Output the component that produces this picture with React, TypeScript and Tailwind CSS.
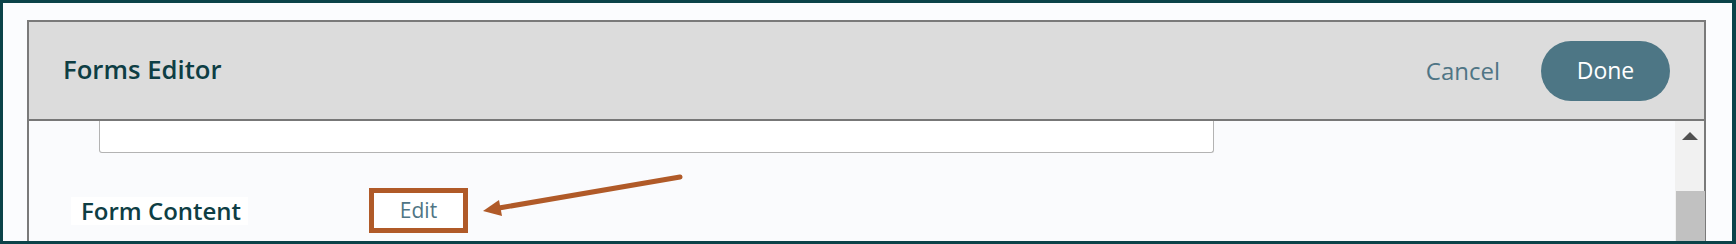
export default function App() {
  return (
    <div
      className="relative w-[1736px] h-[244px] overflow-hidden border-[3px] border-r-4 border-[#0b4349] bg-[#fbfcfe] pl-[24px] pr-[26px] pt-[17px]"
      style={{ fontFamily: '"Open Sans", "Noto Sans", sans-serif' }}
    >
      <div className="w-[1679px] h-[240px] border-2 border-b-0 border-[#7a7a7a] flex flex-col bg-[#fafbfd]">
        <div className="h-[99px] shrink-0 bg-[#dcdcdc] border-b-2 border-[#777777] flex items-center justify-between pl-[34px] pr-[34px]">
          <div className="text-[25.7px] font-semibold text-[#0e3e44]">Forms Editor</div>
          <div className="flex items-center gap-[41px]">
            <button className="text-[24px] text-[#4f7585]">Cancel</button>
            <button className="w-[129px] h-[60px] rounded-full bg-[#4d7685] text-white text-[23px]">Done</button>
          </div>
        </div>
        <div className="flex flex-1">
          <div className="flex-1">
            <div className="ml-[70px] w-[1115px] h-[32px] bg-white border border-t-0 border-[#b3b3b3] rounded-b-[3px]" />
            <div className="flex items-center mt-[35px] pl-[42px]">
              <div className="w-[177px] h-[28px] bg-white px-[10px] flex items-center whitespace-nowrap text-[24px] font-semibold text-[#0e3e44]">
                Form Content
              </div>
              <div className="ml-[121px] w-[99px] h-[45px] border-[5px] border-[#b05a28] bg-white flex items-center justify-center text-[21px] text-[#4f7585]">
                Edit
              </div>
            </div>
          </div>
          <div className="w-[29px] bg-[#f1f1f1] flex flex-col items-center">
            <div className="mt-[11px] w-0 h-0 border-l-[8px] border-r-[8px] border-b-[8px] border-l-transparent border-r-transparent border-b-[#505050]" />
            <div className="mt-[51px] w-full flex-1 bg-[#c1c1c1] ml-[2px]" />
          </div>
        </div>
      </div>
      <svg className="absolute left-[-3px] top-[-3px]" width="1736" height="244" viewBox="0 0 1736 244">
        <line x1="680" y1="177" x2="499" y2="208" stroke="#b05a28" strokeWidth="5" strokeLinecap="round" />
        <polygon points="483,211 502,216 499,200" fill="#b05a28" />
      </svg>
    </div>
  );
}
